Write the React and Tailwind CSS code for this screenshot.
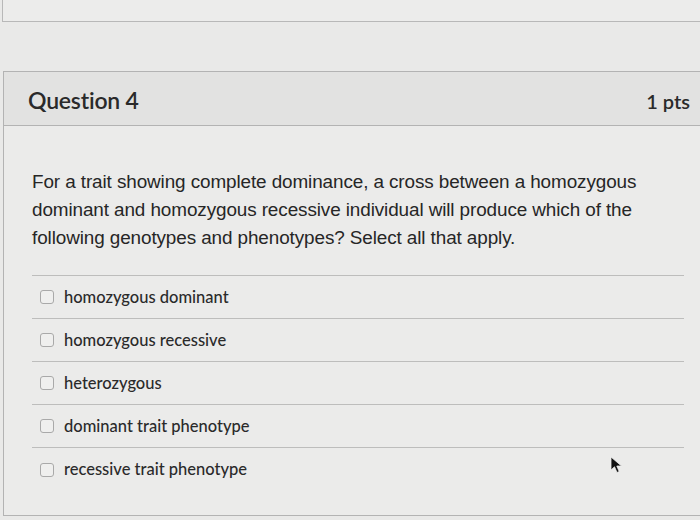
import React from 'react';

const answers = [
  'homozygous dominant',
  'homozygous recessive',
  'heterozygous',
  'dominant trait phenotype',
  'recessive trait phenotype',
];

function Cursor() {
  return (
    <svg className="absolute left-[610px] top-[456px]" width="14" height="18" viewBox="0 0 14 18">
      <path d="M1 1 L1 14 L4.5 10.8 L7 16.5 L9.2 15.5 L6.8 10 L11.5 10 Z" fill="#111" stroke="#eee" strokeWidth="0.8" />
    </svg>
  );
}

export default function App() {
  return (
    <div className="relative h-[520px] w-[700px] overflow-hidden bg-[#e9e9e8] font-['Lato','Liberation_Sans',sans-serif] text-[#2a2a2a]">
      {/* tail of the previous question */}
      <div className="ml-[2px] h-[22px] border-b border-l border-[#b8b8b8] bg-[#ececeb]" />

      <div className="ml-[3px] mt-[49px] w-[720px] border-y border-l border-[#b3b3b3] bg-[#ebebea]">
        <div className="flex h-[54px] items-center border-b border-[#b3b3b3] bg-[#e2e2e1] pl-[24px] pr-[33px]">
          <h2 className="flex-1 pt-[3px] text-[23px] font-semibold tracking-[-0.2px] text-[#2a2a2a]">Question 4</h2>
          <span className="pt-[5px] text-[20px] font-semibold text-[#2a2a2a]">1 pts</span>
        </div>

        <div className="pb-[24px] pl-[28px] pt-[42px]">
          <p className="w-[625px] font-['Liberation_Sans',Arial,sans-serif] text-[18.9px] leading-[28px] tracking-[-0.1px] text-[#262626]">
            For a trait showing complete dominance, a cross between a homozygous dominant and homozygous recessive
            individual will produce which of the following genotypes and phenotypes? Select all that apply.
          </p>

          <ul className="mt-[23px] w-[652px]">
            {answers.map((answer, i) => (
              <li
                key={answer}
                className={`flex h-[43px] items-center gap-[10px] border-t border-[#bdbdbc] pl-[8px] ${i === 4 ? 'h-[44px]' : ''}`}
              >
                <span className="h-[14px] w-[14px] rounded-[3px] border border-[#a9a9a9] bg-[#efefee]" />
                <span className="text-[16.5px] font-medium text-[#2a2a2a]">{answer}</span>
              </li>
            ))}
          </ul>
        </div>
      </div>

      <Cursor />
    </div>
  );
}
